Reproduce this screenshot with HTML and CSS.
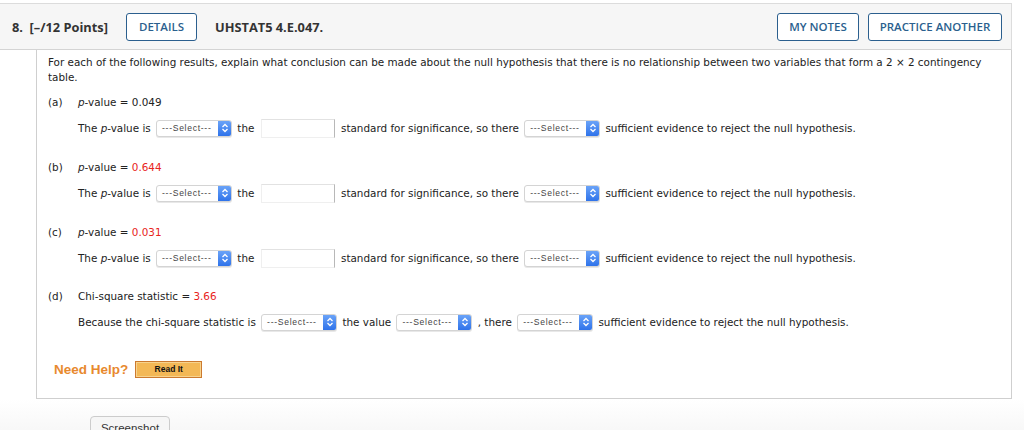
FILE: index.html
```html
<!DOCTYPE html>
<html>
<head>
<meta charset="utf-8">
<link rel="stylesheet" href="styles.css">
</head>
<body>
<div class="question">
  <div class="qhead">
    <span class="qnum">8.&nbsp; [–/12 Points]</span>
    <span class="btn btn-details">DETAILS</span>
    <span class="qid">UHSTAT5 4.E.047.</span>
    <span class="spacer"></span>
    <span class="btn btn-notes">MY NOTES</span>
    <span class="btn btn-practice">PRACTICE ANOTHER</span>
  </div>
  <div class="qbody">
    <p class="intro">For each of the following results, explain what conclusion can be made about the null hypothesis that there is no relationship between two variables that form a 2 × 2 contingency table.</p>

    <div class="part">
      <div class="plabel"><span class="pl">(a)</span><span><i>p</i>-value = 0.049</span></div>
      <div class="prow">The <i>p</i>-value is <span class="sel"><span class="st">---Select---</span><span class="arr"><svg width="8" height="10" viewBox="0 0 8 10"><path d="M1.5 4 L4 1.5 L6.5 4 M1.5 6 L4 8.5 L6.5 6" fill="none" stroke="#fff" stroke-width="1.3"/></svg></span></span> the <span class="inp"></span> standard for significance, so there <span class="sel"><span class="st">---Select---</span><span class="arr"><svg width="8" height="10" viewBox="0 0 8 10"><path d="M1.5 4 L4 1.5 L6.5 4 M1.5 6 L4 8.5 L6.5 6" fill="none" stroke="#fff" stroke-width="1.3"/></svg></span></span> sufficient evidence to reject the null hypothesis.</div>
    </div>

    <div class="part">
      <div class="plabel"><span class="pl">(b)</span><span><i>p</i>-value = <span class="red">0.644</span></span></div>
      <div class="prow">The <i>p</i>-value is <span class="sel"><span class="st">---Select---</span><span class="arr"><svg width="8" height="10" viewBox="0 0 8 10"><path d="M1.5 4 L4 1.5 L6.5 4 M1.5 6 L4 8.5 L6.5 6" fill="none" stroke="#fff" stroke-width="1.3"/></svg></span></span> the <span class="inp"></span> standard for significance, so there <span class="sel"><span class="st">---Select---</span><span class="arr"><svg width="8" height="10" viewBox="0 0 8 10"><path d="M1.5 4 L4 1.5 L6.5 4 M1.5 6 L4 8.5 L6.5 6" fill="none" stroke="#fff" stroke-width="1.3"/></svg></span></span> sufficient evidence to reject the null hypothesis.</div>
    </div>

    <div class="part">
      <div class="plabel"><span class="pl">(c)</span><span><i>p</i>-value = <span class="red">0.031</span></span></div>
      <div class="prow">The <i>p</i>-value is <span class="sel"><span class="st">---Select---</span><span class="arr"><svg width="8" height="10" viewBox="0 0 8 10"><path d="M1.5 4 L4 1.5 L6.5 4 M1.5 6 L4 8.5 L6.5 6" fill="none" stroke="#fff" stroke-width="1.3"/></svg></span></span> the <span class="inp"></span> standard for significance, so there <span class="sel"><span class="st">---Select---</span><span class="arr"><svg width="8" height="10" viewBox="0 0 8 10"><path d="M1.5 4 L4 1.5 L6.5 4 M1.5 6 L4 8.5 L6.5 6" fill="none" stroke="#fff" stroke-width="1.3"/></svg></span></span> sufficient evidence to reject the null hypothesis.</div>
    </div>

    <div class="part part-d">
      <div class="plabel"><span class="pl">(d)</span><span>Chi-square statistic = <span class="red">3.66</span></span></div>
      <div class="prow prow-d">Because the chi-square statistic is <span class="sel"><span class="st">---Select---</span><span class="arr"><svg width="8" height="10" viewBox="0 0 8 10"><path d="M1.5 4 L4 1.5 L6.5 4 M1.5 6 L4 8.5 L6.5 6" fill="none" stroke="#fff" stroke-width="1.3"/></svg></span></span> the value <span class="sel"><span class="st">---Select---</span><span class="arr"><svg width="8" height="10" viewBox="0 0 8 10"><path d="M1.5 4 L4 1.5 L6.5 4 M1.5 6 L4 8.5 L6.5 6" fill="none" stroke="#fff" stroke-width="1.3"/></svg></span></span> , there <span class="sel"><span class="st">---Select---</span><span class="arr"><svg width="8" height="10" viewBox="0 0 8 10"><path d="M1.5 4 L4 1.5 L6.5 4 M1.5 6 L4 8.5 L6.5 6" fill="none" stroke="#fff" stroke-width="1.3"/></svg></span></span> sufficient evidence to reject the null hypothesis.</div>
    </div>

    <div class="help">
      <span class="needhelp">Need Help?</span>
      <span class="readit">Read It</span>
    </div>
  </div>
</div>
<div class="footer">
  <span class="shot">Screenshot</span>
</div>
</body>
</html>
```

FILE: styles.css
```css
html, body {
  margin: 0;
  padding: 0;
  background: #fff;
}
body {
  width: 1024px;
  height: 430px;
  overflow: hidden;
  font-family: "DejaVu Sans", Verdana, sans-serif;
  color: #222;
}
.question {
  padding-top: 3px;
}
.qhead {
  box-sizing: border-box;
  width: 1012px;
  height: 47px;
  background: #f6f6f6;
  border-top: 1px solid #dcdcdc;
  border-right: 1px solid #dcdcdc;
  border-bottom: 1px solid #d4d4d4;
  display: flex;
  align-items: center;
  padding-left: 12px;
  padding-right: 9px;
  font-family: "Open Sans", sans-serif;
}
.qnum {
  font-weight: 700;
  font-size: 12.8px;
  color: #333;
  width: 114px;
}
.qid {
  font-weight: 700;
  font-size: 12.8px;
  color: #333;
  margin-left: 18px;
}
.spacer { flex: 1; }
.btn {
  box-sizing: border-box;
  height: 28px;
  display: inline-flex;
  align-items: center;
  justify-content: center;
  border: 1px solid #2b5f8e;
  border-radius: 3px;
  color: #2b5f8e;
  font-size: 11.5px;
  font-weight: 600;
  background: #fff;
}
.btn-details { width: 71px; }
.btn-notes { width: 82px; }
.btn-practice { width: 134px; margin-left: 9px; }
.qbody {
  box-sizing: border-box;
  width: 976px;
  margin-left: 36px;
  height: 349px;
  border-left: 1px solid #cfcfcf;
  border-right: 1px solid #cfcfcf;
  border-bottom: 1px solid #cfcfcf;
  padding: 5px 11px 0 11px;
  font-size: 10.4px;
  line-height: 15px;
}
.intro {
  margin: 0;
  width: 940px;
}
.part {
  margin-top: 10px;
}
.part + .part { margin-top: 23px; }
.part + .part-d { margin-top: 22px; }
.plabel {
  display: flex;
  height: 15px;
}
.pl {
  width: 30px;
}
.prow {
  margin-top: 9px;
  padding-left: 30px;
  height: 18px;
  line-height: 18px;
  white-space: nowrap;
}
.prow-d { margin-top: 9px; }
.red { color: #e8241c; }
.sel {
  box-sizing: border-box;
  display: inline-flex;
  align-items: center;
  justify-content: space-between;
  width: 76px;
  height: 17px;
  vertical-align: middle;
  border: 1px solid #d4d4d4;
  border-radius: 3px;
  background: #fff;
  margin: -2px 2px 0 2px;
  overflow: hidden;
  box-shadow: 0 1px 0 #e8e8e8;
}
.st {
  font-family: "Liberation Sans", Helvetica, sans-serif;
  font-size: 8.6px;
  letter-spacing: 0.7px;
  color: #444;
  padding-left: 5px;
  line-height: 15px;
}
.arr {
  width: 13px;
  height: 15px;
  background: linear-gradient(#6aa3f8, #2f73ea);
  display: flex;
  align-items: center;
  justify-content: center;
}
.inp {
  box-sizing: border-box;
  display: inline-block;
  width: 74px;
  height: 19px;
  vertical-align: middle;
  border-top: 1px solid #e2e2e2;
  border-left: 1px solid #efefef;
  border-bottom: 1px solid #efefef;
  border-right: 1px solid #b8b8b8;
  margin: -2px 3px 0 3px;
}
.help {
  display: flex;
  align-items: center;
  margin-top: 30px;
  padding-left: 6px;
}
.needhelp {
  font-family: "Liberation Sans", Arial, sans-serif;
  font-weight: 700;
  font-size: 13.5px;
  color: #e8892e;
}
.readit {
  box-sizing: border-box;
  margin-left: 7px;
  width: 67px;
  height: 17px;
  border: 1px solid #cc7a2f;
  box-shadow: inset 0 0 0 1px #f7d38e;
  background: #f3b856;
  font-family: "Liberation Sans", Arial, sans-serif;
  font-weight: 700;
  font-size: 8.5px;
  color: #111;
  display: flex;
  align-items: center;
  justify-content: center;
}
.footer {
  height: 30px;
  background: linear-gradient(#fff, #f4f4f4);
  padding-left: 90px;
  padding-top: 17px;
}
.shot {
  box-sizing: border-box;
  display: inline-block;
  width: 80px;
  height: 24px;
  border: 1px solid #ccc;
  border-radius: 4px;
  background: #f6f6f6;
  font-family: "Liberation Sans", Arial, sans-serif;
  font-size: 11.5px;
  color: #333;
  text-align: center;
  line-height: 22px;
}
```
